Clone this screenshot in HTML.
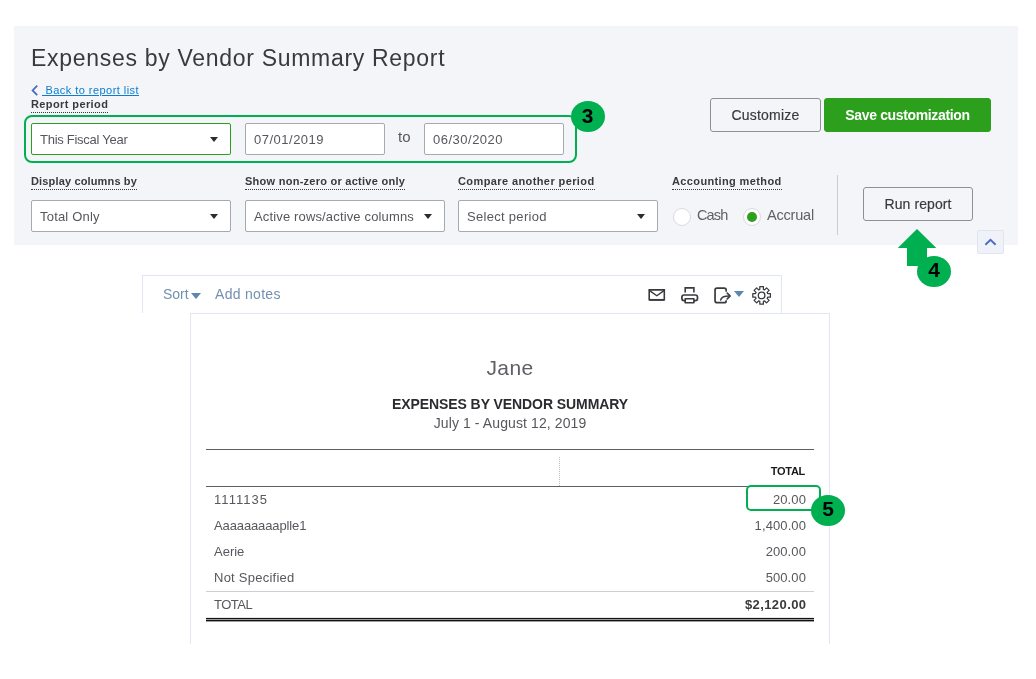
<!DOCTYPE html>
<html>
<head>
<meta charset="utf-8">
<title>Expenses by Vendor Summary Report</title>
<style>
*{box-sizing:border-box;margin:0;padding:0}
html,body{width:1036px;height:679px;background:#fff;overflow:hidden}
body{font-family:"Liberation Sans",sans-serif;color:#393a3d;position:relative;will-change:transform}
.abs{position:absolute}
.t{position:absolute;white-space:nowrap;line-height:1}
.panel{position:absolute;left:14px;top:26px;width:1004px;height:219px;background:#f4f5f8}
.lbl{font-size:11px;font-weight:bold;color:#393a3d;border-bottom:1px dotted #393a3d;padding-bottom:2px}
.box{position:absolute;height:32px;background:#fff;border:1px solid #a7a9b2;border-radius:2px}
.box .v{position:absolute;left:8px;top:9px;font-size:13px;line-height:1;color:#55575c;white-space:nowrap}
.caret{position:absolute;width:0;height:0;border-left:4px solid transparent;border-right:4px solid transparent;border-top:5px solid #2b2c2f}
.btn{position:absolute;height:34px;border:1px solid #8d9096;border-radius:3px;font-size:14px;color:#393a3d;text-align:center;line-height:32px;white-space:nowrap}
.badge{position:absolute;width:34px;height:31px;border-radius:50%;background:#00b050;color:#000;font-weight:bold;font-size:21px;text-align:center;line-height:31px}
.row{position:absolute;left:206px;width:608px;height:26px;font-size:13px;color:#57585d}
.row .n{position:absolute;left:8px;top:6px;line-height:1;white-space:nowrap}
.row .a{position:absolute;right:8px;top:6px;line-height:1;white-space:nowrap;letter-spacing:0.1px}
</style>
</head>
<body>

<!-- ===== filter panel ===== -->
<div class="panel"></div>

<div class="t" id="title" style="left:31px;top:47px;font-size:23px;letter-spacing:0.7px;color:#393a3d">Expenses by Vendor Summary Report</div>

<svg class="abs" style="left:30px;top:84px" width="10" height="13" viewBox="0 0 10 13"><path d="M7.2 1.6 L2.6 6.4 L7.2 11.2" fill="none" stroke="#4a6cc0" stroke-width="1.8"/></svg>
<div class="t" id="back" style="left:42px;top:85px;font-size:11px;letter-spacing:0.45px;color:#0a7dcf;text-decoration:underline">&nbsp;Back to report list</div>

<div class="t lbl" id="l1" style="left:31px;top:99px;letter-spacing:0.4px">Report period</div>

<!-- green annotation around period -->
<div class="abs" style="left:24px;top:115px;width:553px;height:48px;border:2px solid #00b050;border-radius:8px"></div>

<div class="box" style="left:31px;top:123px;width:200px;border-color:#2ca01c"><span class="v" style="letter-spacing:-0.27px">This Fiscal Year</span><i class="caret" style="left:178px;top:13px"></i></div>
<div class="box" style="left:245px;top:123px;width:140px"><span class="v" style="letter-spacing:0.5px">07/01/2019</span></div>
<div class="t" id="to" style="left:398px;top:129px;font-size:15px;color:#55575c">to</div>
<div class="box" style="left:424px;top:123px;width:140px"><span class="v" style="letter-spacing:0.5px">06/30/2020</span></div>

<div class="badge" style="left:570.5px;top:101px;line-height:30px">3</div>

<div class="btn" style="left:710px;top:98px;width:111px;letter-spacing:0.2px;-webkit-text-stroke:0.18px #393a3d">Customize</div>
<div class="btn" style="left:824px;top:98px;width:167px;background:#2ca01c;border-color:#2ca01c;color:#fff;font-weight:bold;font-size:14px;letter-spacing:-0.35px">Save customization</div>

<div class="t lbl" id="l2" style="left:31px;top:176px;letter-spacing:0.15px">Display columns by</div>
<div class="t lbl" id="l3" style="left:245px;top:176px;letter-spacing:0.26px">Show non-zero or active only</div>
<div class="t lbl" id="l4" style="left:458px;top:176px;letter-spacing:0.4px">Compare another period</div>
<div class="t lbl" id="l5" style="left:672px;top:176px;letter-spacing:0.37px">Accounting method</div>

<div class="box" style="left:31px;top:200px;width:200px"><span class="v" style="letter-spacing:0.2px">Total Only</span><i class="caret" style="left:178px;top:13px"></i></div>
<div class="box" style="left:245px;top:200px;width:200px"><span class="v" style="letter-spacing:0.15px">Active rows/active columns</span><i class="caret" style="left:178px;top:13px"></i></div>
<div class="box" style="left:458px;top:200px;width:200px"><span class="v" style="letter-spacing:0.3px">Select period</span><i class="caret" style="left:178px;top:13px"></i></div>

<!-- radios -->
<div class="abs" style="left:673px;top:208px;width:18px;height:18px;border-radius:50%;background:#fff;border:1px solid #d9dbe0"></div>
<div class="t" id="cash" style="left:697px;top:208px;font-size:14.5px;letter-spacing:-0.85px;color:#5f6166">Cash</div>
<div class="abs" style="left:743px;top:208px;width:18px;height:18px;border-radius:50%;background:#fff;border:1px solid #d9dbe0"></div>
<div class="abs" style="left:747px;top:212px;width:10px;height:10px;border-radius:50%;background:#2ca01c"></div>
<div class="t" id="accr" style="left:767px;top:208px;font-size:14.5px;letter-spacing:-0.2px;color:#5f6166">Accrual</div>

<div class="abs" style="left:837px;top:175px;width:1px;height:60px;background:#c9cbd1"></div>
<div class="btn" style="left:863px;top:187px;width:110px;letter-spacing:0.1px;-webkit-text-stroke:0.18px #393a3d">Run report</div>

<!-- collapse button -->
<div class="abs" style="left:977px;top:230px;width:27px;height:24px;background:#f0f2fa;border:1px solid #dfe4f2;border-radius:2px"></div>
<svg class="abs" style="left:983px;top:236px" width="15" height="12" viewBox="0 0 15 12"><path d="M2.4 8.8 L7.5 3.8 L12.6 8.8" fill="none" stroke="#4a6cc0" stroke-width="1.9"/></svg>

<!-- green arrow + badge 4 -->
<svg class="abs" style="left:896px;top:227px" width="44" height="42" viewBox="0 0 44 42"><path d="M21 2 L40.3 21 L31 21 L31 39 L11 39 L11 21 L1.8 21 Z" fill="#00b050"/></svg>
<div class="badge" style="left:917px;top:256px;line-height:28px">4</div>

<!-- ===== report toolbar ===== -->
<div class="abs" style="left:142px;top:275px;width:640px;height:38px;border:1px solid #e1e6f3;border-bottom:none"></div>
<div class="t" id="sort" style="left:163px;top:287px;font-size:14px;color:#7390ae">Sort</div>
<i class="caret" style="left:191px;top:293px;border-top-color:#5b87b0;border-left-width:5px;border-right-width:5px;border-top-width:6px"></i>
<div class="t" id="notes" style="left:215px;top:287px;font-size:14px;letter-spacing:0.3px;color:#7390ae">Add notes</div>

<!-- toolbar icons -->
<svg class="abs" style="left:646px;top:285px" width="128" height="22" viewBox="646 285 128 22" fill="none" stroke="#393a3d" stroke-width="1.7" stroke-linejoin="round" stroke-linecap="round">
  <!-- mail -->
  <path d="M649.2 289.9 H664.3 V299.7 H649.2 Z" stroke-linejoin="miter" stroke-width="1.6"/>
  <path d="M649.2 299.9 H664.3" stroke-width="1.9" stroke-linecap="butt"/>
  <path d="M649.6 290.6 L656.8 295.8 L664 290.6" stroke-width="1.4"/>
  <!-- printer -->
  <path d="M685.2 292.4 V287.9 H693.9 V292.4" stroke-linejoin="miter" stroke-linecap="butt" stroke-width="1.6"/>
  <rect x="681.9" y="295" width="15.6" height="5.7" rx="2.2"/>
  <rect x="685.2" y="298.8" width="8.7" height="3.9" fill="#fff" stroke-width="1.6"/>
  <!-- export -->
  <path d="M726.15 291 V290 Q726.15 288.05 724.2 288.05 H717 Q715.05 288.05 715.05 290 V300.7 Q715.05 302.65 717 302.65 H724.2 Q726.15 302.65 726.15 300.9"/>
  <path d="M720.7 299.9 Q721.8 296 729 296" stroke-width="1.6"/>
  <path d="M727.2 293.1 L730.2 296 L727.2 298.9" stroke-width="1.6"/>
  <!-- gear -->
  <circle cx="761.6" cy="295.4" r="3.3" stroke-width="1.3"/>
  <path stroke-width="1.25" d="M759.81 289.36 L759.81 286.58 L763.39 286.58 L763.39 289.36 L764.61 289.86 L766.57 287.90 L769.10 290.43 L767.14 292.39 L767.64 293.61 L770.42 293.61 L770.42 297.19 L767.64 297.19 L767.14 298.41 L769.10 300.37 L766.57 302.90 L764.61 300.94 L763.39 301.44 L763.39 304.22 L759.81 304.22 L759.81 301.44 L758.59 300.94 L756.63 302.90 L754.10 300.37 L756.06 298.41 L755.56 297.19 L752.78 297.19 L752.78 293.61 L755.56 293.61 L756.06 292.39 L754.10 290.43 L756.63 287.90 L758.59 289.86 Z"/>
</svg>
<i class="caret" style="left:734px;top:291px;border-top-color:#5b87b0;border-left-width:5px;border-right-width:5px;border-top-width:6px"></i>

<!-- ===== report sheet ===== -->
<div class="abs" style="left:190px;top:313px;width:640px;height:331px;background:#fff;border:1px solid #e1e6f3;border-bottom:none"></div>

<div class="t" id="jane" style="left:0;width:1020px;text-align:center;top:357px;font-size:21px;letter-spacing:0.4px;color:#5f6065">Jane</div>
<div class="t" id="rt" style="left:0;width:1020px;text-align:center;top:397px;font-size:14px;font-weight:bold;letter-spacing:-0.07px;color:#2b2c2f">EXPENSES BY VENDOR SUMMARY</div>
<div class="t" id="rd" style="left:0;width:1020px;text-align:center;top:416px;font-size:14px;letter-spacing:0.1px;color:#55575c">July 1 - August 12, 2019</div>

<div class="abs" style="left:206px;top:449px;width:608px;height:1px;background:#5e5f63"></div>
<div class="abs" style="left:559px;top:457px;width:0;height:29px;border-left:1px dotted #b8b9bd"></div>
<div class="t" id="th" style="left:705px;width:100px;text-align:right;top:466px;font-size:11px;font-weight:bold;letter-spacing:-0.3px;color:#1a1a1c">TOTAL</div>
<div class="abs" style="left:206px;top:486px;width:608px;height:1px;background:#5e5f63"></div>

<div class="row" style="top:487px"><span class="n" style="letter-spacing:1.05px">1111135</span><span class="a">20.00</span></div>
<div class="row" style="top:513px"><span class="n" style="letter-spacing:-0.12px">Aaaaaaaaaplle1</span><span class="a">1,400.00</span></div>
<div class="row" style="top:539px"><span class="n">Aerie</span><span class="a">200.00</span></div>
<div class="row" style="top:565px"><span class="n" style="letter-spacing:0.25px">Not Specified</span><span class="a">500.00</span></div>
<div class="abs" style="left:206px;top:591px;width:608px;height:1px;background:#cfcfd2"></div>
<div class="row" style="top:592px"><span class="n" style="letter-spacing:-0.5px">TOTAL</span><span class="a" style="font-weight:bold;color:#393a3d;letter-spacing:0.4px;right:7.6px">$2,120.00</span></div>
<svg class="abs" style="left:206px;top:616px" width="608" height="8" viewBox="0 0 608 8"><rect x="0" y="1.9" width="608" height="1.5" fill="#111"/><rect x="0" y="4" width="608" height="1.4" fill="#111"/></svg>

<!-- green annotation around 20.00 + badge 5 -->
<div class="abs" style="left:746px;top:485px;width:75px;height:26px;border:2px solid #00b050;border-radius:5px"></div>
<div class="badge" style="left:811px;top:495px;line-height:28px">5</div>

</body>
</html>
